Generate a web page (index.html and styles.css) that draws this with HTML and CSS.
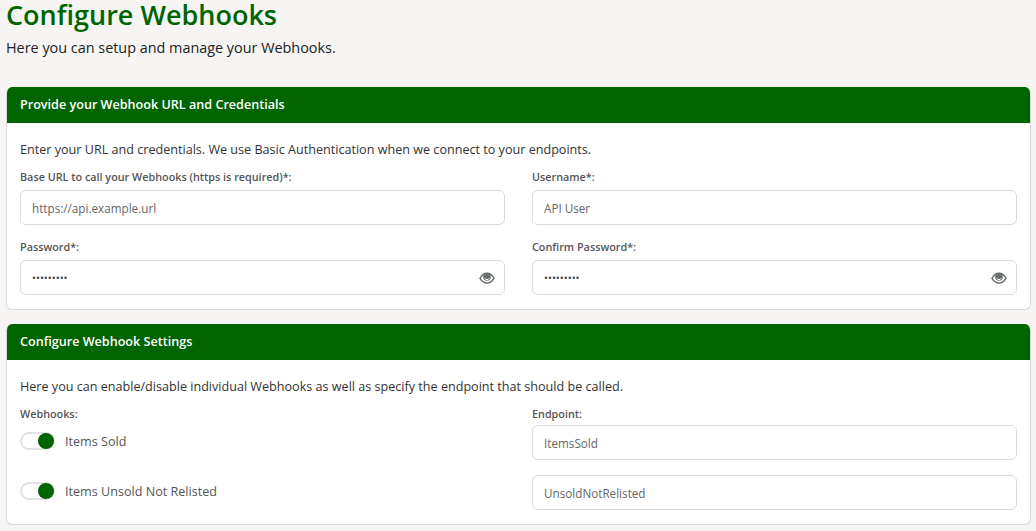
FILE: index.html
```html
<!DOCTYPE html>
<html>
<head>
	<meta charset="UTF-8">
	<title>Configure Webhooks</title>
	<link rel="stylesheet" href="styles.css">
</head>
<body>
	<h1 class="title">Configure Webhooks</h1>
	<p class="subtitle">Here you can setup and manage your Webhooks.</p>

	<div class="panel">
		<div class="panel-head">Provide your Webhook URL and Credentials</div>
		<div class="panel-body">
			<p class="intro">Enter your URL and credentials. We use Basic Authentication when we connect to your endpoints.</p>
			<div class="grid">
				<div class="field">
					<label>Base URL to call your Webhooks (https is required)*:</label>
					<div class="input">https://api.example.url</div>
				</div>
				<div class="field">
					<label>Username*:</label>
					<div class="input">API User</div>
				</div>
				<div class="field">
					<label>Password*:</label>
					<div class="input dots">•••••••••
						<svg class="eye" viewBox="0 0 16 12">
							<path fill="none" stroke="#6a6f6d" stroke-width="1.500" d="M1 6.300C3 2.800 5.500 1.300 8 1.300s5 1.500 7 5c-2 3.200-4.500 4.700-7 4.700S3 9.500 1 6.300z"/>
							<circle cx="8" cy="5" r="3.800" fill="#6a6f6d"/>
							<path fill="none" stroke="#fff" stroke-width="1" d="M5.800 6.200a2.400 2.400 0 0 0 4.400 0"/>
						</svg>
					</div>
				</div>
				<div class="field">
					<label>Confirm Password*:</label>
					<div class="input dots">•••••••••
						<svg class="eye" viewBox="0 0 16 12">
							<path fill="none" stroke="#6a6f6d" stroke-width="1.500" d="M1 6.300C3 2.800 5.500 1.300 8 1.300s5 1.500 7 5c-2 3.200-4.500 4.700-7 4.700S3 9.500 1 6.300z"/>
							<circle cx="8" cy="5" r="3.800" fill="#6a6f6d"/>
							<path fill="none" stroke="#fff" stroke-width="1" d="M5.800 6.200a2.400 2.400 0 0 0 4.400 0"/>
						</svg>
					</div>
				</div>
			</div>
		</div>
	</div>

	<div class="panel">
		<div class="panel-head">Configure Webhook Settings</div>
		<div class="panel-body">
			<p class="intro">Here you can enable/disable individual Webhooks as well as specify the endpoint that should be called.</p>
			<div class="grid wide-gap">
				<div class="field">
					<label>Webhooks:</label>
					<div class="toggle-row"><span class="toggle"></span>Items Sold</div>
				</div>
				<div class="field">
					<label>Endpoint:</label>
					<div class="input">ItemsSold</div>
				</div>
				<div class="field">
					<div class="toggle-row"><span class="toggle"></span>Items Unsold Not Relisted</div>
				</div>
				<div class="field">
					<div class="input">UnsoldNotRelisted</div>
				</div>
			</div>
		</div>
	</div>
</body>
</html>
```

FILE: styles.css
```css
*{
	box-sizing: border-box;
	padding: 0;
	margin: 0;
}
body{
	background: #f6f5f3;
	font-family: "Open Sans", sans-serif;
	color: #333;
	padding: 0 5px 0 6px;
	overflow: hidden;
}
.title{
	color: #006400;
	font-size: 27px;
	font-weight: 600;
	line-height: 30px;
}
.subtitle{
	font-size: 14.400px;
	line-height: 20px;
	margin-top: 8px;
	margin-bottom: 29px;
	color: #222;
}
.panel{
	background: #fff;
	border: 1px solid #d9d9d9;
	border-top: 0;
	border-radius: 6px;
	margin-bottom: 14px;
	overflow: hidden;
}
.panel-head{
	background: #006400;
	color: #fff;
	font-size: 12.600px;
	font-weight: 600;
	height: 36px;
	line-height: 35px;
	padding: 0 13px;
}
.panel-body{
	padding: 17px 13px 14px;
}
.intro{
	font-size: 12.600px;
	line-height: 20px;
	margin-bottom: 9px;
}
.grid{
	display: grid;
	grid-template-columns: 485px 485px;
	column-gap: 27px;
	row-gap: 14px;
}
.wide-gap{
	row-gap: 15px;
}
.field label{
	display: block;
	font-size: 10.800px;
	font-weight: 600;
	line-height: 15px;
	margin-bottom: 6px;
	color: #555;
}
.wide-gap .field label{
	margin-bottom: 4px;
}
.input{
	position: relative;
	height: 35px;
	line-height: 34px;
	border: 1px solid #d9d9d9;
	border-radius: 6px;
	background: #fff;
	padding: 0 11px;
	font-size: 11.700px;
	color: #666;
}
.dots{
	color: #444;
	font-size: 10.500px;
}
.eye{
	position: absolute;
	right: 9px;
	top: 11px;
	width: 16px;
	height: 12px;
}
.toggle-row{
	display: flex;
	align-items: center;
	height: 26px;
	padding-top: 6px;
	font-size: 12.600px;
	color: #555;
}
.toggle{
	position: relative;
	display: block;
	width: 35px;
	height: 18px;
	border: 2px solid #e2e2e2;
	border-radius: 9px;
	background: #fff;
	margin-right: 10px;
}
.toggle::after{
	content: "";
	position: absolute;
	right: -1px;
	top: -1px;
	width: 16px;
	height: 16px;
	border-radius: 50%;
	background: #006400;
}
```
